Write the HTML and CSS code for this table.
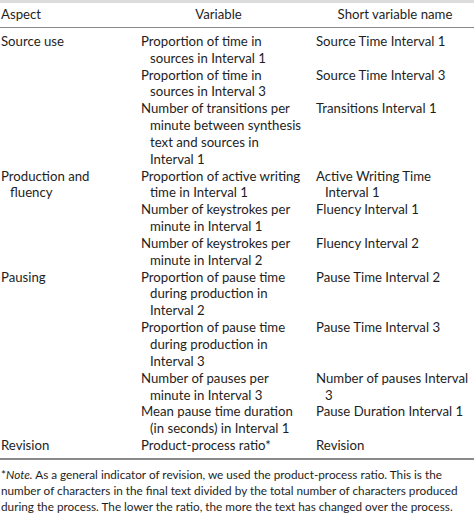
FILE: index.html
```html
<!DOCTYPE html>
<html>
<head>
<meta charset="utf-8">
<link rel="stylesheet" href="styles.css">
</head>
<body>
<div class="page">
  <div class="table">
    <div class="row head">
      <div class="c1">Aspect</div>
      <div class="c2">Variable</div>
      <div class="c3">Short variable name</div>
    </div>
    <div class="body">
      <div class="row">
        <div class="c1">Source use</div>
        <div class="c2">Proportion of time in<br>sources in Interval 1</div>
        <div class="c3">Source Time Interval 1</div>
      </div>
      <div class="row">
        <div class="c1"></div>
        <div class="c2">Proportion of time in<br>sources in Interval 3</div>
        <div class="c3">Source Time Interval 3</div>
      </div>
      <div class="row">
        <div class="c1"></div>
        <div class="c2">Number of transitions per<br>minute between synthesis<br>text and sources in<br>Interval 1</div>
        <div class="c3">Transitions Interval 1</div>
      </div>
      <div class="row">
        <div class="c1">Production and<br>fluency</div>
        <div class="c2">Proportion of active writing<br>time in Interval 1</div>
        <div class="c3">Active Writing Time<br>Interval 1</div>
      </div>
      <div class="row">
        <div class="c1"></div>
        <div class="c2">Number of keystrokes per<br>minute in Interval 1</div>
        <div class="c3">Fluency Interval 1</div>
      </div>
      <div class="row">
        <div class="c1"></div>
        <div class="c2">Number of keystrokes per<br>minute in Interval 2</div>
        <div class="c3">Fluency Interval 2</div>
      </div>
      <div class="row">
        <div class="c1">Pausing</div>
        <div class="c2">Proportion of pause time<br>during production in<br>Interval 2</div>
        <div class="c3">Pause Time Interval 2</div>
      </div>
      <div class="row">
        <div class="c1"></div>
        <div class="c2">Proportion of pause time<br>during production in<br>Interval 3</div>
        <div class="c3">Pause Time Interval 3</div>
      </div>
      <div class="row">
        <div class="c1"></div>
        <div class="c2">Number of pauses per<br>minute in Interval 3</div>
        <div class="c3">Number of pauses Interval<br>3</div>
      </div>
      <div class="row">
        <div class="c1"></div>
        <div class="c2">Mean pause time duration<br>(in seconds) in Interval 1</div>
        <div class="c3">Pause Duration Interval 1</div>
      </div>
      <div class="row">
        <div class="c1">Revision</div>
        <div class="c2">Product-process ratio*</div>
        <div class="c3">Revision</div>
      </div>
    </div>
  </div>
  <p class="note">*<i>Note.</i> As a general indicator of revision, we used the product-process ratio. This is the<br>number of characters in the final text divided by the total number of characters produced<br>during the process. The lower the ratio, the more the text has changed over the process.</p>
</div>
</body>
</html>
```
FILE: styles.css
```css
html, body {
  margin: 0;
  padding: 0;
  background: #ffffff;
}
.page {
  width: 474px;
  font-family: Lato, "Open Sans", sans-serif;
  font-size: 13.2px;
  line-height: 16.85px;
  color: #1e1e1e;
}
.table {
  border-top: 3px solid #dcdcdc;
  border-bottom: 2px solid #8a8a8a;
}
.row {
  display: grid;
  grid-template-columns: 141px 175px 158px;
}
.head {
  padding: 3px 0 4.4px;
  border-bottom: 1.5px solid #8a8a8a;
}
.head .c1 {
  padding-left: 1px;
}
.head .c2 {
  text-align: center;
  padding-right: 20px;
}
.head .c3 {
  text-align: center;
}
.body {
  padding: 4.6px 0 4.4px;
}
.body .c1,
.body .c2,
.body .c3 {
  padding-left: 9px;
  text-indent: -9px;
}
.body .c1 {
  margin-left: 1px;
}
.note {
  margin: 6.5px 0 0;
  padding-left: 1px;
  font-size: 11.75px;
  line-height: 16.3px;
}
```
